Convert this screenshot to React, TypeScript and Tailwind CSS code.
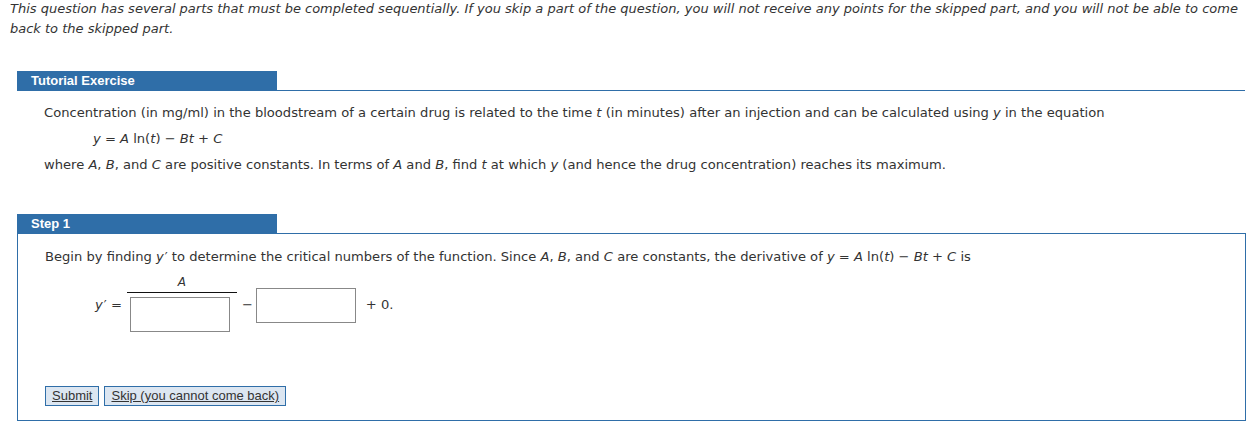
const font = { fontFamily: '"DejaVu Sans", Verdana, sans-serif' };

function Bar({ label }: { label: string }) {
  return (
    <div className="flex items-end border-b border-[#2f6ea8]">
      <div className="w-[260px] h-[19px] bg-[#2f6ea8] pl-[14px] text-white font-bold text-[13px] leading-[19px] font-['Liberation_Sans',Arial,sans-serif]">
        {label}
      </div>
    </div>
  );
}

function Box({ className = "" }: { className?: string }) {
  return <div className={"w-[100px] h-[35px] border border-[#888] bg-white " + className} />;
}

export default function App() {
  return (
    <div className="bg-white min-h-[427px] text-[#333] text-[13.1px] leading-[20px]" style={font}>
      <p className="italic pl-[10px] text-[13px] leading-[20px] -mt-[1px]">
        This question has several parts that must be completed sequentially. If you skip a part of the question, you will not receive any points for the skipped part, and you will not be able to come back to the skipped part.
      </p>

      <div className="mt-[32px] ml-[17px] mr-[12px]">
        <Bar label="Tutorial Exercise" />
        <div className="pl-[27px] pt-[12px]">
          <p>
            Concentration (in mg/ml) in the bloodstream of a certain drug is related to the time <i>t</i> (in minutes) after an injection and can be calculated using <i>y</i> in the equation
          </p>
          <p className="pl-[49px] mt-[6px]">
            <i>y</i> = <i>A</i> ln(<i>t</i>) − <i>Bt</i> + <i>C</i>
          </p>
          <p className="mt-[6px]">
            where <i>A</i>, <i>B</i>, and <i>C</i> are positive constants. In terms of <i>A</i> and <i>B</i>, find <i>t</i> at which <i>y</i> (and hence the drug concentration) reaches its maximum.
          </p>
        </div>
      </div>

      <div className="mt-[39px] ml-[17px] mr-[11px]">
        <Bar label="Step 1" />
        <div className="border border-t-0 border-[#2f6ea8] h-[187px] pl-[27px] pt-[13px]">
          <p>
            Begin by finding <i>y</i><span className="ml-[1px]">′</span> to determine the critical numbers of the function. Since <i>A</i>, <i>B</i>, and <i>C</i> are constants, the derivative of <i>y</i> = <i>A</i> ln(<i>t</i>) − <i>Bt</i> + <i>C</i> is
          </p>
          <div className="flex items-center mt-[7px] pl-[50px]">
            <span className="mt-[4px]">
              <i>y</i><span className="ml-[1px]">′</span> =
            </span>
            <div className="flex flex-col items-start ml-[5px]">
              <div className="w-[110px] text-center text-[12px] leading-[16px] italic">A</div>
              <div className="w-[110px] border-t border-[#111] mt-[2px]" />
              <Box className="mt-[4px] ml-[3px]" />
            </div>
            <span className="ml-[5px] mt-[4px]">−</span>
            <Box className="ml-[3px] mt-[4px]" />
            <span className="ml-[10px] mt-[4px]">+ 0.</span>
          </div>
          <div className="flex gap-[5px] mt-[54px] font-['Liberation_Sans',Arial,sans-serif] text-[13px]">
            <button className="h-[20px] px-[6px] leading-[18px] bg-[#dce6f1] border border-[#2f6ea8] underline text-[#333]">
              Submit
            </button>
            <button className="h-[20px] px-[6px] leading-[18px] bg-[#dce6f1] border border-[#2f6ea8] underline text-[#333]">
              Skip (you cannot come back)
            </button>
          </div>
        </div>
      </div>
    </div>
  );
}
